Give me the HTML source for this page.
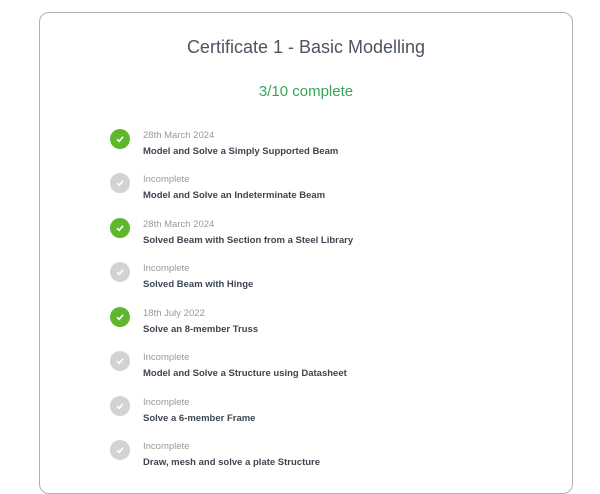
<!DOCTYPE html>
<html><head><style>
body{margin:0;width:600px;height:466px;background:#fff;overflow:hidden;font-family:"Liberation Sans",sans-serif;}
.card{position:absolute;left:39px;top:12px;width:532px;height:480px;border:1px solid #b0b0b0;border-radius:10px;}
.t{position:absolute;left:39px;width:534px;top:37px;text-align:center;font-size:18px;color:#4a5560;}
.s{position:absolute;left:39px;width:534px;top:83px;text-align:center;font-size:15px;color:#3aa55a;}
.r{position:absolute;left:110px;}
.i{position:absolute;left:0;top:0;width:20px;height:20px;border-radius:50%;background:#d3d3d3;}
.i.g{background:#5db82e;}
.i svg{position:absolute;left:5px;top:5px;}
.d{position:absolute;left:33px;top:1px;font-size:9.5px;color:#999;white-space:nowrap;}
.n{position:absolute;left:33px;top:17px;font-size:9.5px;font-weight:bold;color:#3d4650;white-space:nowrap;}
</style></head><body>
<div class="card"></div>
<div class="t">Certificate 1 - Basic Modelling</div>
<div class="s">3/10 complete</div>
<div class="r" style="top:129px"><div class="i g"><svg width="10" height="10"><path d="M2 5.2 L4.2 7.3 L8 2.8" stroke="#fff" stroke-width="1.6" fill="none"/></svg></div><div class="d">28th March 2024</div><div class="n">Model and Solve a Simply Supported Beam</div></div>
<div class="r" style="top:173px"><div class="i"><svg width="10" height="10"><path d="M2 5.2 L4.2 7.3 L8 2.8" stroke="#fff" stroke-width="1.6" fill="none"/></svg></div><div class="d">Incomplete</div><div class="n">Model and Solve an Indeterminate Beam</div></div>
<div class="r" style="top:218px"><div class="i g"><svg width="10" height="10"><path d="M2 5.2 L4.2 7.3 L8 2.8" stroke="#fff" stroke-width="1.6" fill="none"/></svg></div><div class="d">28th March 2024</div><div class="n">Solved Beam with Section from a Steel Library</div></div>
<div class="r" style="top:262px"><div class="i"><svg width="10" height="10"><path d="M2 5.2 L4.2 7.3 L8 2.8" stroke="#fff" stroke-width="1.6" fill="none"/></svg></div><div class="d">Incomplete</div><div class="n">Solved Beam with Hinge</div></div>
<div class="r" style="top:307px"><div class="i g"><svg width="10" height="10"><path d="M2 5.2 L4.2 7.3 L8 2.8" stroke="#fff" stroke-width="1.6" fill="none"/></svg></div><div class="d">18th July 2022</div><div class="n">Solve an 8-member Truss</div></div>
<div class="r" style="top:351px"><div class="i"><svg width="10" height="10"><path d="M2 5.2 L4.2 7.3 L8 2.8" stroke="#fff" stroke-width="1.6" fill="none"/></svg></div><div class="d">Incomplete</div><div class="n">Model and Solve a Structure using Datasheet</div></div>
<div class="r" style="top:396px"><div class="i"><svg width="10" height="10"><path d="M2 5.2 L4.2 7.3 L8 2.8" stroke="#fff" stroke-width="1.6" fill="none"/></svg></div><div class="d">Incomplete</div><div class="n">Solve a 6-member Frame</div></div>
<div class="r" style="top:440px"><div class="i"><svg width="10" height="10"><path d="M2 5.2 L4.2 7.3 L8 2.8" stroke="#fff" stroke-width="1.6" fill="none"/></svg></div><div class="d">Incomplete</div><div class="n">Draw, mesh and solve a plate Structure</div></div>
</body></html>
